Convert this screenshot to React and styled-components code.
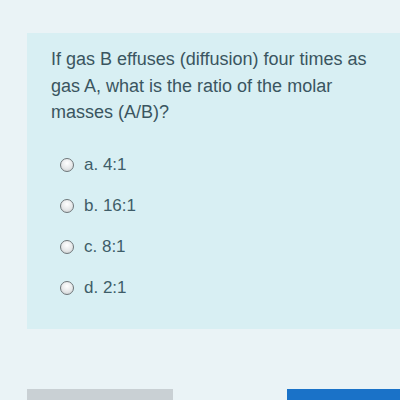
import React from 'react';
import styled, { createGlobalStyle } from 'styled-components';

const GlobalStyle = createGlobalStyle`
  html, body {
    margin: 0;
    padding: 0;
    background: #eaf3f6;
    font-family: 'Liberation Sans', Arial, sans-serif;
  }
`;

const Page = styled.div`
  width: 400px;
  height: 400px;
  overflow: hidden;
  padding: 33px 0 0 27px;
  box-sizing: border-box;
`;

const Card = styled.div`
  width: 400px;
  height: 296px;
  box-sizing: border-box;
  background: #d8eff3;
  padding: 13px 0 0 24px;
`;

const Question = styled.p`
  margin: 0;
  width: 325px;
  font-size: 18px;
  line-height: 26.5px;
  color: #3a5560;
`;

const Options = styled.ul`
  list-style: none;
  margin: 29px 0 0 9px;
  padding: 0;
  display: flex;
  flex-direction: column;
  gap: 21px;
`;

const Option = styled.li`
  display: flex;
  align-items: center;
  gap: 10px;
  height: 20px;
  font-size: 17px;
  color: #3e5d68;
`;

const Radio = styled.span`
  width: 14px;
  height: 14px;
  border-radius: 50%;
  box-sizing: border-box;
  border: 1px solid #6f7679;
  background: radial-gradient(circle at 50% 35%, #ffffff 0%, #e6e8e9 55%, #c4c8ca 100%);
`;

const Buttons = styled.div`
  display: flex;
  justify-content: space-between;
  margin-top: 60px;
`;

const Button = styled.div`
  width: ${p => p.$width}px;
  height: 20px;
  background: ${p => p.$color};
`;

const answers = ['a. 4:1', 'b. 16:1', 'c. 8:1', 'd. 2:1'];

export default function App() {
  return (
    <Page>
      <GlobalStyle />
      <Card>
        <Question>
          If gas B effuses (diffusion) four times as gas A, what is the ratio of the molar masses (A/B)?
        </Question>
        <Options>
          {answers.map(a => (
            <Option key={a}>
              <Radio />
              {a}
            </Option>
          ))}
        </Options>
      </Card>
      <Buttons>
        <Button $width={146} $color="#c9d0d4" />
        <Button $width={113} $color="#1a72c8" />
      </Buttons>
    </Page>
  );
}
